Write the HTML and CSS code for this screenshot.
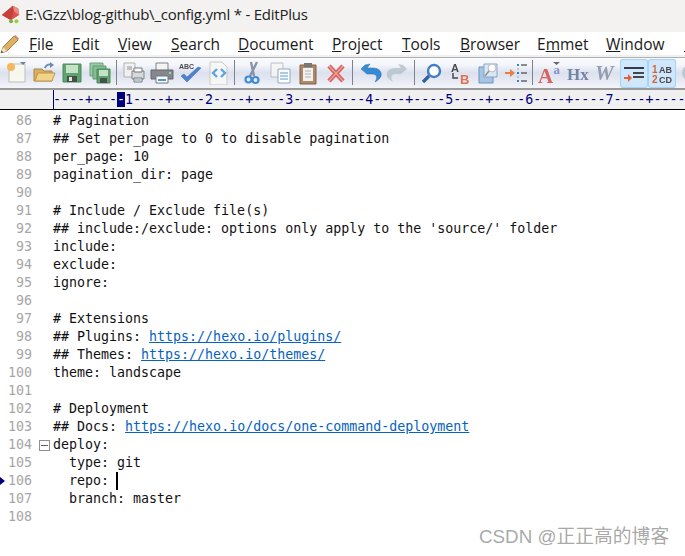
FILE: index.html
```html
<!DOCTYPE html>
<html lang="en">
<head>
<meta charset="utf-8">
<title>EditPlus</title>
<link rel="stylesheet" href="styles.css">
</head>
<body>
<div class="app">
  <header class="titlebar">
    <svg class="appicon" viewBox="0 0 22 24"><path d="M1 13 13 3l6 3 1 7-9 6z" fill="#d9534f"/><path d="M13 3l6 3 1 7-6-4z" fill="#e98d84"/><path d="M1 13l10 6 3-10L13 3z" fill="#c8403c"/><circle cx="11" cy="20" r="2.2" fill="#7cb342"/><circle cx="17" cy="20" r="2.2" fill="#9ccc3c"/></svg>
    <span class="titletext">E:\Gzz\blog-github\_config.yml * - EditPlus</span>
  </header>
  <nav class="menubar">
    <svg class="pencil" viewBox="0 0 20 20"><path d="M1 19l2-6L14 2l4 4L7 17z" fill="#e0b060" stroke="#8a6a3a" stroke-width=".8"/><path d="M14 2l1.500-1 3.500 3.500-1 1.500z" fill="#d88"/><path d="M1 19l2-6 4 4z" fill="#efe0c0"/><path d="M1 19l.7-2.200 1.500 1.500z" fill="#333"/></svg>
    <span class="mi m1"><u>F</u>ile</span>
    <span class="mi m2"><u>E</u>dit</span>
    <span class="mi m3"><u>V</u>iew</span>
    <span class="mi m4"><u>S</u>earch</span>
    <span class="mi m5"><u>D</u>ocument</span>
    <span class="mi m6"><u>P</u>roject</span>
    <span class="mi m7"><u>T</u>ools</span>
    <span class="mi m8"><u>B</u>rowser</span>
    <span class="mi m9">E<u>m</u>met</span>
    <span class="mi m10"><u>W</u>indow</span>
    <span class="mi m11"><u>H</u>elp</span>
  </nav>
  <div class="toolbar">
    <span class="tb"><svg viewBox="0 0 24 24"><path d="M5 3h16v18H5z" fill="#fbfaf0" stroke="#b9b9b0"/><circle cx="7" cy="6" r="4" fill="#f6b04a"/><path d="M16 1h6l-3 3z" fill="#5a7290"/></svg></span>
    <span class="tb"><svg viewBox="0 0 24 24"><path d="M2 8h8l2 2h8v10H2z" fill="#d9a74a" stroke="#a67c2e"/><path d="M3 20l3-8h17l-3 8z" fill="#f4d27a" stroke="#b98e3a"/><path d="M13 7c1-4 5-4 7-3" fill="none" stroke="#5a7fa8" stroke-width="2"/><path d="M18 1l4 3-4 3z" fill="#5a7fa8"/></svg></span>
    <span class="tb"><svg viewBox="0 0 24 24"><path d="M3 3h18v18H3z" fill="#4f9a5c" stroke="#3a7a46"/><path d="M6 4h12v8H6z" fill="#bfe3c0"/><path d="M7 15h10v6H7z" fill="#2f3a34"/><path d="M9 16h3v4H9z" fill="#dfe8df"/></svg></span>
    <span class="tb"><svg viewBox="0 0 24 24"><path d="M2 2h13v13H2z" fill="#8cc497" stroke="#5c9c6a"/><path d="M5 5h13v13H5z" fill="#7ab888" stroke="#4f9060"/><path d="M9 8h13v14H9z" fill="#4f9a5c" stroke="#3a7a46"/><path d="M11 9h9v6h-9z" fill="#bfe3c0"/><path d="M12 17h7v5h-7z" fill="#2f3a34"/></svg></span>
    <span class="sep"></span>
    <span class="tb"><svg viewBox="0 0 24 24"><path d="M2 2h11v14H2z" fill="#f2f2f0" stroke="#a8a8a8"/><path d="M5 5h5v4H5z" fill="#bbb"/><path d="M10 10h12v8H10z" fill="#d8d8d8" stroke="#777"/><path d="M12 7h8v4h-8zM12 17h8v4h-8z" fill="#fff" stroke="#666"/><path d="M13 19h6" stroke="#3c8fd0"/></svg></span>
    <span class="tb"><svg viewBox="0 0 24 24"><path d="M6 2h12v8H6z" fill="#f4f4f4" stroke="#777"/><path d="M1 9h22v9H1z" fill="#777c82" stroke="#555"/><path d="M6 15h12v7H6z" fill="#fff" stroke="#666"/><path d="M8 19h8" stroke="#3c8fd0" stroke-width="2"/><circle cx="20" cy="12" r="1" fill="#8f8"/></svg></span>
    <span class="tb"><svg viewBox="0 0 24 24"><path d="M3 15l6 6L23 7l-3-1L9 16l-3-3z" fill="#3d74c8" stroke="#245aa8" stroke-width=".5"/><text class="abc" x="1" y="8">ABC</text></svg></span>
    <span class="tb"><svg viewBox="0 0 24 24"><path d="M4 1h12l5 5v18H4z" fill="#f8f8f4" stroke="#c4c4bc"/><path d="M11 8l-4 4 4 4M15 8l4 4-4 4" fill="none" stroke="#4a9ee0" stroke-width="2.400"/></svg></span>
    <span class="sep"></span>
    <span class="tb"><svg viewBox="0 0 24 24"><path d="M17 1 10 15M11 1l3 14" fill="none" stroke="#7d879c" stroke-width="2.400"/><circle cx="8.500" cy="18.500" r="3" fill="none" stroke="#2a7fd4" stroke-width="2.200"/><circle cx="15.500" cy="19" r="3" fill="none" stroke="#2a7fd4" stroke-width="2.200"/></svg></span>
    <span class="tb"><svg viewBox="0 0 24 24"><path d="M3 2h12v14H3z" fill="#f6f6f4" stroke="#b4b8c0"/><path d="M10 8h12v14H10z" fill="#fff" stroke="#8aa0b8"/><path d="M12 12h8M12 15h8M12 18h8" stroke="#4a90c8"/></svg></span>
    <span class="tb"><svg viewBox="0 0 24 24"><path d="M4 4h16v19H4z" fill="#a87c54" stroke="#70502e"/><path d="M7 7h10v13H7z" fill="#f4f4f2"/><path d="M8 2h8v4H8z" fill="#666"/><path d="M9 10h6M9 13h6M9 16h6" stroke="#aaa"/></svg></span>
    <span class="tb"><svg viewBox="0 0 24 24"><path d="M5 5 19 20M19 5 5 20" stroke="#d8504a" stroke-width="4.500"/><path d="M5 5 19 20M19 5 5 20" stroke="#ef9a94" stroke-width="1.200"/></svg></span>
    <span class="sep"></span>
    <span class="tb"><svg viewBox="0 0 24 24"><path d="M8 5 4 9l6 5h5c5 0 6 3 3 8 5-3 7-6 6-9-1-4-5-5-9-5h-5l3-4z" fill="#1f7fd0" stroke="#1a5fa0" stroke-width=".5" transform="translate(-1 -1)"/></svg></span>
    <span class="tb"><svg viewBox="0 0 24 24"><path d="M8 5 4 9l6 5h5c5 0 6 3 3 8 5-3 7-6 6-9-1-4-5-5-9-5h-5l3-4z" fill="#b8c6cc" transform="matrix(-1 0 0 1 25 -1)"/></svg></span>
    <span class="sep"></span>
    <span class="tb"><svg viewBox="0 0 24 24"><circle cx="14" cy="10" r="6" fill="#fff" stroke="#2a6fc0" stroke-width="2.400"/><path d="M9 15l-6 6" stroke="#1c4f90" stroke-width="3.400"/></svg></span>
    <span class="tb"><svg viewBox="0 0 24 24"><text class="ltr" x="3" y="11">A</text><path d="M5 12v5h5" fill="none" stroke="#333" stroke-width="1.500"/><text class="ltrb" x="12" y="23">B</text></svg></span>
    <span class="tb"><svg viewBox="0 0 24 24"><path d="M3 6h14v16H3z" fill="#9fc0e0" stroke="#5a88b8"/><path d="M8 3h13v13H8z" fill="#dbe8f4" stroke="#7a9cc0"/><circle cx="16" cy="7" r="4" fill="#fff" stroke="#b0b8c0"/><path d="M13 10l-4 5" stroke="#888" stroke-width="1.500"/></svg></span>
    <span class="tb"><svg viewBox="0 0 24 24"><path d="M1 11h5V8l5 4-5 4v-3H1z" fill="#e8702a"/><path d="M13 4h2M13 12h2M13 20h2" stroke="#2a6fc0" stroke-width="2"/><path d="M17 4h6M17 12h6M17 20h6" stroke="#555" stroke-width="1.600"/><path d="M13 8h2M13 16h2" stroke="#6a9fd0"/></svg></span>
    <span class="sep"></span>
    <span class="tb"><svg viewBox="0 0 24 24"><text class="fa" x="0" y="22">A</text><text class="fb" x="15.500" y="13">a</text><path d="M15 1h7l-3.500 3z" fill="#555"/></svg></span>
    <span class="tb"><svg viewBox="0 0 24 24"><text class="hx" x="1" y="19">Hx</text></svg></span>
    <span class="tb"><svg viewBox="0 0 24 24"><text class="wi" x="1" y="19">W</text></svg></span>
    <span class="tb on"><svg viewBox="0 0 24 24"><path d="M2 6h20" stroke="#223" stroke-width="2"/><path d="M11 11h11M11 15h11" stroke="#333" stroke-width="2"/><path d="M2 15h4v-3l4 4-4 4v-3H2z" fill="#e8501e"/></svg></span>
    <span class="tb on"><svg viewBox="0 0 24 24"><text class="n1" x="2" y="11">1</text><text class="n2" x="9" y="11">AB</text><text class="n1" x="2" y="21">2</text><text class="n2" x="9" y="21">CD</text></svg></span>
    <span class="tb"><svg viewBox="0 0 24 24"><circle cx="12" cy="12" r="8" fill="#b8c4d0"/><circle cx="12" cy="12" r="3.500" fill="#e4e8f0"/></svg></span>
  </div>
  <div class="ruler">
    <span class="rulerpad"></span>
    <span class="rulertext">----+---<b>-</b>1----+----2----+----3----+----4----+----5----+----6----+----7----+----8</span>
  </div>
  <main class="editor">
    <div class="row"><span class="num">86</span><span class="code"># Pagination</span></div>
    <div class="row"><span class="num">87</span><span class="code">## Set per_page to 0 to disable pagination</span></div>
    <div class="row"><span class="num">88</span><span class="code">per_page: 10</span></div>
    <div class="row"><span class="num">89</span><span class="code">pagination_dir: page</span></div>
    <div class="row"><span class="num">90</span><span class="code"></span></div>
    <div class="row"><span class="num">91</span><span class="code"># Include / Exclude file(s)</span></div>
    <div class="row"><span class="num">92</span><span class="code">## include:/exclude: options only apply to the 'source/' folder</span></div>
    <div class="row"><span class="num">93</span><span class="code">include:</span></div>
    <div class="row"><span class="num">94</span><span class="code">exclude:</span></div>
    <div class="row"><span class="num">95</span><span class="code">ignore:</span></div>
    <div class="row"><span class="num">96</span><span class="code"></span></div>
    <div class="row"><span class="num">97</span><span class="code"># Extensions</span></div>
    <div class="row"><span class="num">98</span><span class="code">## Plugins: <a>https://hexo.io/plugins/</a></span></div>
    <div class="row"><span class="num">99</span><span class="code">## Themes: <a>https://hexo.io/themes/</a></span></div>
    <div class="row"><span class="num">100</span><span class="code">theme: landscape</span></div>
    <div class="row"><span class="num">101</span><span class="code"></span></div>
    <div class="row"><span class="num">102</span><span class="code"># Deployment</span></div>
    <div class="row"><span class="num">103</span><span class="code">## Docs: <a>https://hexo.io/docs/one-command-deployment</a></span></div>
    <div class="row"><span class="num">104</span><span class="fold"></span><span class="code">deploy:</span></div>
    <div class="row"><span class="num">105</span><span class="code">  type: git</span></div>
    <div class="row"><span class="marker"></span><span class="num">106</span><span class="code">  repo: <i class="caret"></i></span></div>
    <div class="row"><span class="num">107</span><span class="code">  branch: master</span></div>
    <div class="row"><span class="num">108</span><span class="code"></span></div>
  </main>
  <div class="watermark">CSDN @正正高的博客</div>
</div>
</body>
</html>
```
FILE: styles.css
```css
* { box-sizing: border-box; }
html, body { margin: 0; padding: 0; height: 100%; background: #fff; overflow: hidden; }
.app { position: relative; width: 685px; height: 556px; overflow: hidden; }

.titlebar { height: 32px; background: #f3f2f1; display: flex; align-items: center; padding: 0 0 5px 1px; }
.appicon { width: 20px; height: 22px; margin-right: 4px; }
.titletext { font: 15px "Open Sans", "Liberation Sans", sans-serif; color: #222; white-space: nowrap; letter-spacing: -.22px; }

.menubar { height: 23px; background: #fff; display: flex; align-items: center; font: 15.500px "Open Sans", "Liberation Sans", sans-serif; color: #1a1a1a; white-space: nowrap; }
.pencil { width: 20px; height: 20px; flex: none; }
.mi { flex: none; }
.m1 { margin-left: 9px; width: 43px; }
.m2 { width: 46px; }
.m3 { width: 53px; }
.m4 { width: 67px; }
.m5 { width: 94px; }
.m6 { width: 70px; }
.m7 { width: 58px; }
.m8 { width: 77px; }
.m9 { width: 69px; }
.m10 { width: 78px; }

.toolbar { height: 35px; display: flex; align-items: stretch; padding: 0 0 0 2px; overflow: hidden;
  border-top: 2px solid #f0f0f0; background: linear-gradient(#fafbfd 0%, #f4f6fb 25%, #dce1ee 50%, #e6e9f3 75%, #f4f5fa 100%);
  border-bottom: 2px solid #9a9a9a; box-shadow: inset 0 1px 0 #b0b0b0; }
.tb { flex: none; width: 28px; display: flex; align-items: center; justify-content: center; border-radius: 3px; }
.tb svg { width: 24px; height: 24px; filter: blur(.5px); opacity: .88; }
.tb.on { background: #cfe6fb; box-shadow: inset 0 0 0 1px #a6d4f6; margin: 2px 0 0; }
.sep { flex: none; width: 6px; position: relative; }
.sep::after { content: ""; position: absolute; left: 2px; top: 3px; bottom: 3px; width: 1px; background: #7f8288; }
.abc { font: bold 7px "Liberation Sans", sans-serif; fill: #333; }
.ltr { font: bold 11px "Liberation Sans", sans-serif; fill: #333; }
.ltrb { font: bold 13px "Liberation Sans", sans-serif; fill: #e0603a; }
.fa { font: bold 21px "Liberation Serif", serif; fill: #d8504a; }
.fb { font: bold 13px "Liberation Serif", serif; fill: #7a80c8; }
.hx { font: bold 17px "Liberation Serif", serif; fill: #64789a; }
.wi { font: italic bold 21px "Liberation Serif", serif; fill: #8a94a8; }
.n1 { font: bold 10px "Liberation Sans", sans-serif; fill: #d8501e; }
.n2 { font: bold 9px "Liberation Sans", sans-serif; fill: #333; }

.ruler { height: 20px; background: #f0f0f0; display: flex; border-bottom: 1px solid #000; font: 13.3px/19px "DejaVu Sans Mono", monospace; color: #00007f; overflow: hidden; }
.rulerpad { flex: none; width: 53px; }
.rulertext { flex: none; border-left: 1px solid #00007f; text-indent: -1px; white-space: pre; }
.rulertext b { font-weight: normal; background: #00007f; color: #f0f0f0; }

.editor { padding-top: 2px; font: 13.3px/18px "DejaVu Sans Mono", monospace; color: #111; }
.row { height: 18px; display: flex; position: relative; }
.num { flex: none; width: 32px; text-align: right; color: #a6a6a6; }
.code { position: absolute; left: 53px; top: 0; white-space: pre; }
.code a { color: #0563c1; text-decoration: underline; }
.fold { position: absolute; left: 39px; top: 4px; width: 11px; height: 11px; border: 1px solid #909090; }
.fold::after { content: ""; position: absolute; left: 1px; right: 1px; top: 4px; height: 1px; background: #606060; }
.marker { position: absolute; left: 0; top: 5px; border-left: 5px solid #00007f; border-top: 4px solid transparent; border-bottom: 4px solid transparent; }
.caret { display: inline-block; width: 2px; height: 18px; background: #000; vertical-align: top; margin-left: -1px; }

.watermark { position: absolute; left: 479px; top: 526px; font: 18.800px/22px "Liberation Sans", "Noto Sans CJK SC", sans-serif; color: rgba(130, 130, 130, .7); white-space: nowrap; }
```
